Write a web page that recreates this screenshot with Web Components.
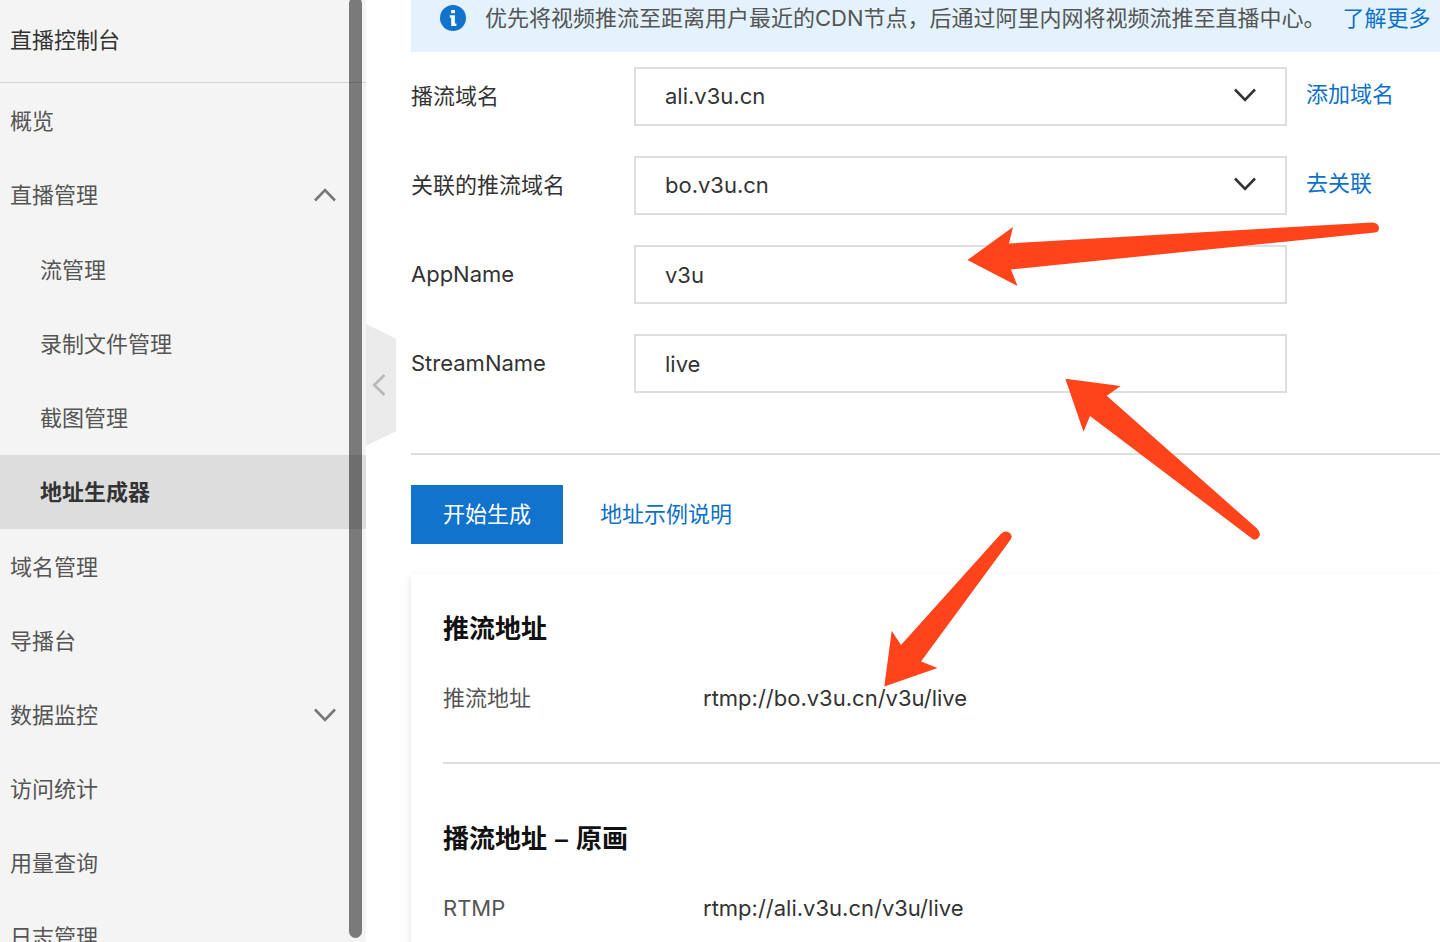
<!DOCTYPE html>
<html lang="zh-CN">
<head>
<meta charset="utf-8">
<meta name="viewport" content="width=device-width, initial-scale=1">
<title>直播控制台 - 地址生成器</title>
<style>
  html, body { margin: 0; height: 100%; }
  body {
    overflow: hidden;
    background: #fff;
    color: #333;
    font: 22px/32px Inter, "Noto Sans CJK SC", sans-serif;
    --link: #0d70c8;
    --line: #dedede;
  }
</style>
</head>
<body>
<live-console></live-console>

<script>
const define = (name, html, setup) => {
  const template = document.createElement('template');
  template.innerHTML = html;
  customElements.define(name, class extends HTMLElement {
    connectedCallback() {
      if (this.shadowRoot) return;
      const root = this.attachShadow({ mode: 'open' });
      root.append(template.content.cloneNode(true));
      if (setup) setup(this, root);
    }
  });
};

/* Chevron icon; direction = up | down | left */
define('ui-chevron', `
  <style>
    :host { display: block; width: 24px; height: 24px; }
    :host([direction="up"]) svg { transform: rotate(180deg); }
    :host([direction="left"]) svg { transform: rotate(90deg); }
    svg { display: block; }
  </style>
  <svg width="24" height="24" viewBox="0 0 24 24" fill="none" stroke="currentColor" stroke-width="2.6" aria-hidden="true">
    <path d="M2 6.5 12 16.8 22 6.5"/>
  </svg>`);

/* One navigation entry */
define('nav-item', `
  <style>
    :host { display: block; }
    a {
      display: flex; align-items: center; justify-content: space-between;
      box-sizing: border-box; height: 74px; padding: 0 29px 0 10px;
      color: #555; text-decoration: none; white-space: nowrap;
    }
    :host([sub]) a { padding-left: 40px; }
    :host([current]) a { background: #ddd; color: #333; font-weight: 700; }
    ui-chevron { color: #777; }
  </style>
  <a href="#"><slot></slot></a>`, (host, root) => {
    const link = root.querySelector('a');
    if (host.hasAttribute('current')) link.setAttribute('aria-current', 'page');
    const direction = host.getAttribute('arrow');
    if (direction) {
      const icon = document.createElement('ui-chevron');
      icon.setAttribute('direction', direction);
      link.append(icon);
    }
  });

define('side-nav', `
  <style>
    :host { display: block; position: relative; overflow: hidden; background: #f4f4f4; }
    header { padding: 24px 10px 26px; border-bottom: 1px solid #d4d4d4; color: #333; }
    nav { padding-top: 1px; }
    .group { padding: 1px 0; }
    .thumb {
      position: absolute; top: -3px; bottom: 4px; right: 4px; width: 13px;
      border-radius: 7px; background: rgba(0, 0, 0, .5);
    }
  </style>
  <header>直播控制台</header>
  <nav>
    <nav-item>概览</nav-item>
    <nav-item arrow="up">直播管理</nav-item>
    <div class="group">
      <nav-item sub>流管理</nav-item>
      <nav-item sub>录制文件管理</nav-item>
      <nav-item sub>截图管理</nav-item>
      <nav-item sub current>地址生成器</nav-item>
    </div>
    <nav-item>域名管理</nav-item>
    <nav-item>导播台</nav-item>
    <nav-item arrow="down">数据监控</nav-item>
    <nav-item>访问统计</nav-item>
    <nav-item>用量查询</nav-item>
    <nav-item>日志管理</nav-item>
  </nav>
  <div class="thumb"></div>`);

/* Handle that folds the side navigation */
define('collapse-handle', `
  <style>
    :host { display: block; }
    button {
      display: flex; align-items: center; width: 30px; height: 122px;
      margin: 0; padding: 0 0 0 1px; border: 0; background: #ebebeb; color: #b8b8b8;
      clip-path: polygon(0 0, 100% 12%, 100% 88%, 0 100%);
    }
  </style>
  <button type="button" aria-label="收起导航"><ui-chevron direction="left"></ui-chevron></button>`);

define('info-banner', `
  <style>
    :host {
      display: flex; align-items: flex-start; box-sizing: border-box; height: 52px;
      padding: 2px 0 0 29px; background: #e3f2fd; color: #555; white-space: nowrap;
    }
    svg { flex: none; margin: 3px 19px 0 0; }
    ::slotted(a) { margin-left: 17px; color: var(--link); text-decoration: none; }
  </style>
  <svg width="26" height="26" viewBox="0 0 26 26" aria-hidden="true">
    <circle cx="13" cy="13" r="13" fill="#1173cc"/>
    <path fill="#fff" d="M11.2 5h3.7v3.2h-3.7zM9.8 10.2h5.1v8.2h1.5v2.5h-5.2v-8.2H9.8z"/>
  </svg>
  <slot></slot>`);

/* Labelled control: a drop-down when "select" is set, else a text box */
define('form-field', `
  <style>
    :host {
      display: grid; grid-template-columns: 223px minmax(0, 653px) auto;
      align-items: center; justify-content: start; white-space: nowrap;
    }
    label { padding-bottom: 2px; }
    .box { position: relative; }
    input, select {
      display: block; box-sizing: border-box; width: 100%; height: 59px; margin: 0;
      padding: 0 29px; border: 2px solid var(--line); border-radius: 0;
      background: #fff; color: #333; font: inherit; appearance: none; outline: 0;
    }
    select { padding-bottom: 2px; }
    ui-chevron { position: absolute; top: 16px; right: 30px; pointer-events: none; }
    ::slotted(a) { margin-left: 19px; padding-bottom: 6px; color: var(--link); text-decoration: none; }
  </style>
  <label for="control"></label>
  <div class="box"></div>
  <slot></slot>`, (host, root) => {
    root.querySelector('label').textContent = host.getAttribute('label');
    const box = root.querySelector('.box');
    const value = host.getAttribute('value');
    const isSelect = host.hasAttribute('select');
    const control = document.createElement(isSelect ? 'select' : 'input');
    control.id = 'control';
    if (isSelect) {
      control.append(new Option(value, value));
      box.append(control, document.createElement('ui-chevron'));
    } else {
      control.type = 'text';
      control.value = value;
      box.append(control);
    }
  });

define('primary-button', `
  <style>
    :host { display: block; }
    button {
      display: block; height: 59px; margin: 0; padding: 0 32px 2px; border: 0;
      background: #1173cc; color: #fff; font: inherit; white-space: nowrap;
    }
  </style>
  <button type="button"><slot></slot></button>`);

define('address-section', `
  <style>
    :host { display: block; padding: 36px 0 48px; }
    :host(:not(:last-child)) { border-bottom: 2px solid var(--line); }
    :host(:not(:first-child)) { padding-top: 56px; }
    h2 {
      margin: 0 0 34px; color: #111;
      font: 600 26px/38px "Liberation Sans", "Noto Sans CJK SC", sans-serif;
    }
    dl { display: grid; grid-template-columns: 260px 1fr; margin: 0; white-space: nowrap; }
    dt { color: #555; }
    dd { margin: 0; color: #333; }
  </style>
  <h2></h2>
  <dl><dt></dt><dd><slot></slot></dd></dl>`, (host, root) => {
    root.querySelector('h2').textContent = host.getAttribute('heading');
    root.querySelector('dt').textContent = host.getAttribute('name');
  });

define('result-card', `
  <style>
    :host { display: block; padding-left: 32px; background: #fff; box-shadow: 0 3px 8px rgba(0, 0, 0, .12); }
  </style>
  <slot></slot>`);

/* Hand-drawn red arrows laid over the form */
define('arrow-marks', `
  <style>
    :host { position: absolute; top: 0; left: 0; pointer-events: none; }
    svg { display: block; }
  </style>
  <svg width="1440" height="942" viewBox="0 0 1440 942" fill="#ff431a" aria-hidden="true">
    <path d="M967.5 260 1013 227 1009 243.5 1372 222.4Q1378.500 222.500 1379 228 1379 232 1375 232.500L1011 269.500 1017.500 286Z"/>
    <path d="M1065.300 378.700 1120.700 386 1106.700 395.700 1256.700 528.300Q1260 531.500 1260 534.500 1258.500 539.300 1254.500 539.700 1252.500 539.300 1251.300 538L1090 416 1083.500 431.700Z"/>
    <path d="M884.300 686.500 891.700 630.700 901 645 1001 533.700Q1003.500 531.300 1006.500 531.400 1011 532.300 1011.700 536.500 1011.500 538.300 1010.300 540L921 661.500 937.500 668Z"/>
  </svg>`);

define('live-console', `
  <style>
    :host {
      position: relative; display: grid; grid-template-columns: 366px 45px minmax(0, 1fr);
      grid-template-rows: 100%; height: 100vh; overflow: hidden;
    }
    collapse-handle { margin-top: 324px; }
    main { min-width: 0; }
    form { display: grid; gap: 30px; padding: 15px 0 60px; border-bottom: 2px solid var(--line); }
    .actions { display: flex; align-items: center; gap: 37px; padding: 30px 0; }
    .actions a { padding-bottom: 2px; color: var(--link); text-decoration: none; }
  </style>
  <side-nav></side-nav>
  <collapse-handle></collapse-handle>
  <main>
    <info-banner><span>优先将视频推流至距离用户最近的CDN节点，后通过阿里内网将视频流推至直播中心。</span><a href="#">了解更多</a></info-banner>
    <form>
      <form-field select label="播流域名" value="ali.v3u.cn"><a href="#">添加域名</a></form-field>
      <form-field select label="关联的推流域名" value="bo.v3u.cn"><a href="#">去关联</a></form-field>
      <form-field label="AppName" value="v3u"></form-field>
      <form-field label="StreamName" value="live"></form-field>
    </form>
    <div class="actions">
      <primary-button>开始生成</primary-button>
      <a href="#">地址示例说明</a>
    </div>
    <result-card>
      <address-section heading="推流地址" name="推流地址">rtmp://bo.v3u.cn/v3u/live</address-section>
      <address-section heading="播流地址 – 原画" name="RTMP">rtmp://ali.v3u.cn/v3u/live</address-section>
    </result-card>
  </main>
  <arrow-marks></arrow-marks>`);
</script>
</body>
</html>
